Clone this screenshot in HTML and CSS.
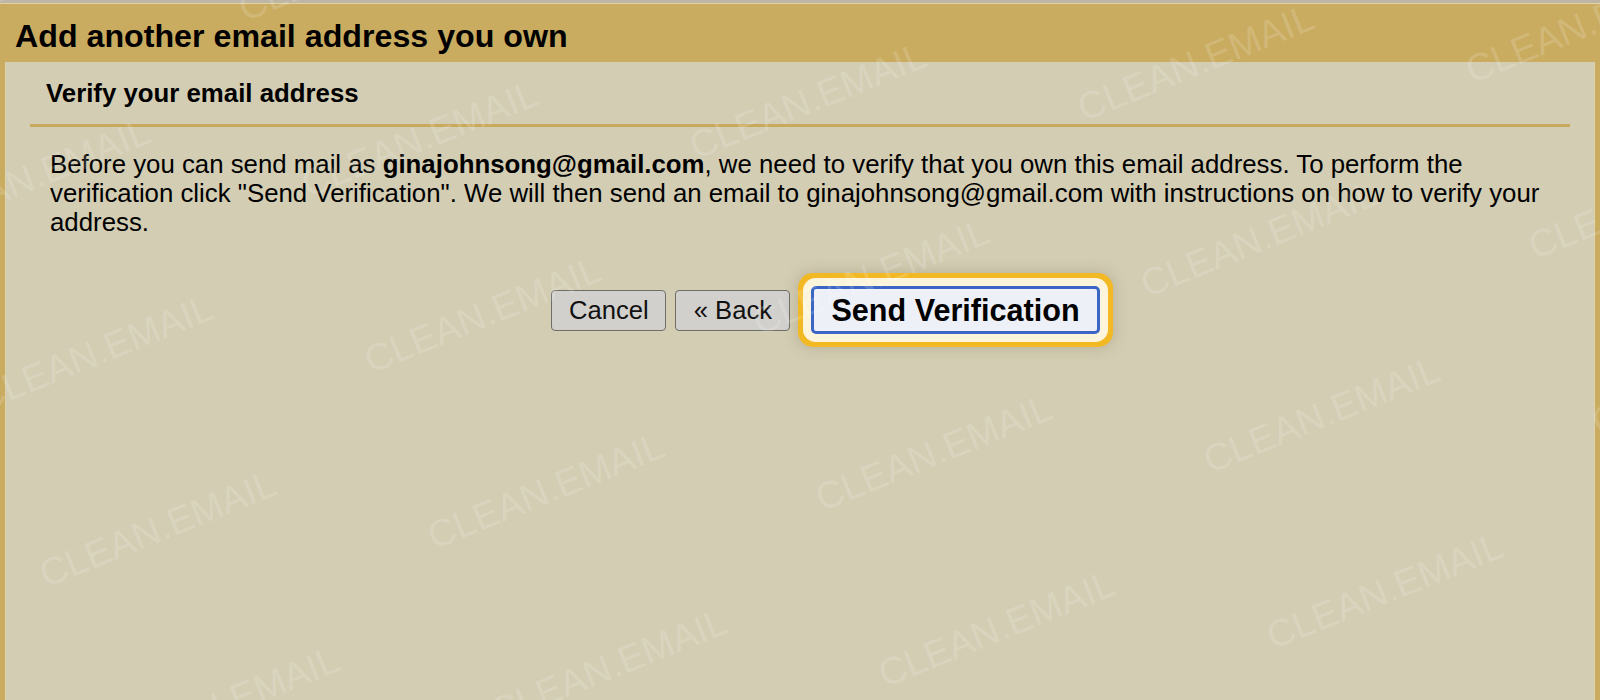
FILE: index.html
```html
<!DOCTYPE html>
<html>
<head>
    <title>Add another email address you own</title>
    <link rel="stylesheet" href="styles.css">
</head>
<body>
    <div class="topbar"></div>
    <div class="dialog">
        <h1 class="dialog-title">Add another email address you own</h1>
        <div class="panel">
            <div class="section">
                <h2 class="section-title">Verify your email address</h2>
                <p class="message">Before you can send mail as <b>ginajohnsong@gmail.com</b>, we need to verify that you own this email address. To perform the verification click "Send Verification". We will then send an email to ginajohnsong@gmail.com with instructions on how to verify your address.</p>
                <div class="actions">
                    <button class="btn" id="cancel-btn">Cancel</button>
                    <button class="btn" id="back-btn">&laquo; Back</button>
                    <button class="btn btn-primary" id="send-btn">Send Verification</button>
                </div>
            </div>
        </div>
    </div>
    <div class="watermarks" id="watermarks"></div>

    <script>
        const watermarks = document.getElementById('watermarks');

        // tile the stamp over the page on a skewed lattice
        const origin = { x: 1196, y: 63 };
        const stepA = { x: -388, y: 38 };
        const stepB = { x: 63, y: 176 };

        for (let i = -2; i <= 5; i++) {
            for (let j = -2; j <= 5; j++) {
                const x = origin.x + i * stepA.x + j * stepB.x;
                const y = origin.y + i * stepA.y + j * stepB.y;
                if (x < -160 || x > 1760 || y < -60 || y > 760) continue;
                const mark = document.createElement('span');
                mark.className = 'watermark';
                mark.textContent = 'CLEAN.EMAIL';
                mark.style.left = x + 'px';
                mark.style.top = y + 'px';
                watermarks.appendChild(mark);
            }
        }
    </script>
</body>
</html>
```

FILE: styles.css
```css
html, body {
    margin: 0;
    height: 100%;
    overflow: hidden;
}
body {
    font-family: "Liberation Sans", Arial, Helvetica, sans-serif;
    color: #000;
    background-color: #c9ac5f;
    position: relative;
    display: flex;
    flex-direction: column;
}
.topbar {
    height: 3px;
    background: #bdb6a4;
    border-bottom: 1px solid #e0d3a6;
}
.dialog {
    flex: 1;
    display: flex;
    flex-direction: column;
    background: #c9ac5f;
    padding: 0 5px;
}
.dialog-title {
    margin: 0;
    padding: 14px 10px 7px;
    font-size: 32.2px;
    font-weight: bold;
}
.panel {
    flex: 1;
    background: #d3cdb3;
    border-left: 1px solid #ddd2ad;
    border-right: 1px solid #ddd2ad;
    padding: 0 24px;
}
.section-title {
    margin: 0;
    padding: 17px 16px 16px;
    font-size: 25.8px;
    font-weight: bold;
    border-bottom: 3px solid #c9aa5d;
}
.message {
    margin: 23px 0 0;
    padding: 0 16px 0 20px;
    font-size: 25.8px;
}
.actions {
    display: flex;
    align-items: center;
    justify-content: center;
    gap: 9px;
    margin-top: 49px;
    padding-left: 51px;
}
.btn {
    font-family: "Liberation Sans", Arial, Helvetica, sans-serif;
    font-size: 25.6px;
    line-height: normal;
    min-width: 115px;
    padding: 5px 16px;
    color: #111;
    background: #d1d0cd;
    border: 1px solid #6f6d68;
    border-radius: 4px;
}
.btn-primary {
    margin-left: 12px;
    font-size: 30.6px;
    font-weight: bold;
    padding: 3.5px 17px;
    color: #000;
    background: #eef0f7;
    border: 3px solid #3b66c6;
    border-radius: 5px;
    box-shadow: 0 0 0 8px #fdf5db, 0 0 0 13px #f3b924, 0 0 14px 14px rgba(110, 100, 70, 0.25);
}
.watermarks {
    position: absolute;
    inset: 0;
    pointer-events: none;
    overflow: hidden;
}
.watermark {
    position: absolute;
    font-size: 38px;
    white-space: nowrap;
    color: rgba(255, 255, 255, 0.16);
    transform: translate(-50%, -50%) rotate(-22deg);
}
```
